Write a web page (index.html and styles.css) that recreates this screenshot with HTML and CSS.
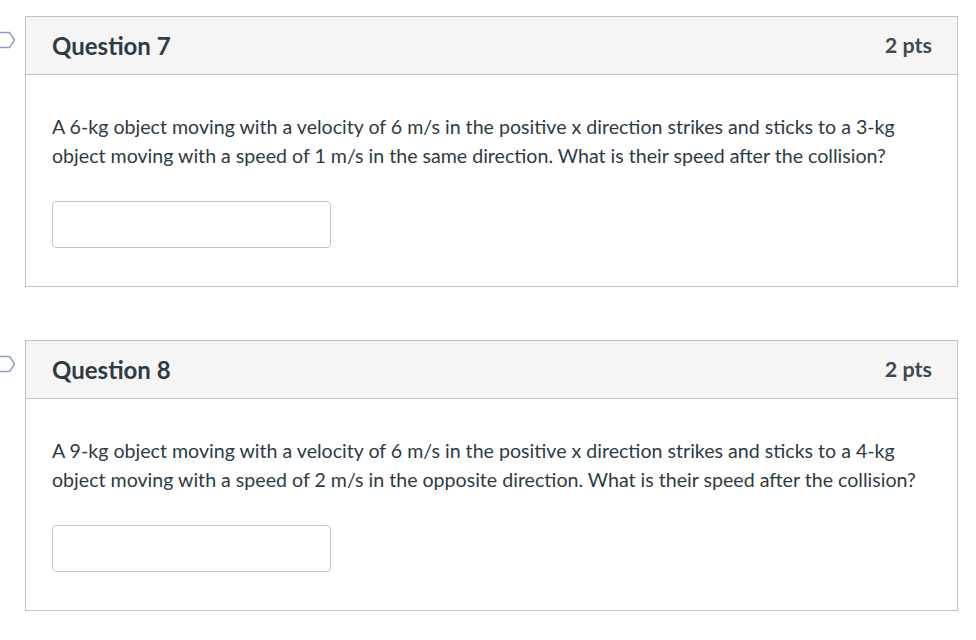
FILE: index.html
```html
<!DOCTYPE html>
<html>
<head>
<meta charset="utf-8">
<link rel="stylesheet" href="styles.css">
</head>
<body>
<div class="quiz">
  <div class="question">
    <svg class="flag" width="16" height="18" viewBox="0 0 16 18"><path d="M-3 1.5 H9.5 L14.5 9 L9.5 16.5 H-3" fill="none" stroke="#8ea3bb" stroke-width="1.4" stroke-linejoin="round"/></svg>
    <div class="q-header">
      <span class="q-title">Question 7</span>
      <span class="q-pts">2 pts</span>
    </div>
    <div class="q-body">
      <p class="q-text">A 6-kg object moving with a velocity of 6 m/s in the positive x direction strikes and sticks to a 3-kg object moving with a speed of 1 m/s in the same direction. What is their speed after the collision?</p>
      <input class="q-input" type="text">
    </div>
  </div>
  <div class="question">
    <svg class="flag" width="16" height="18" viewBox="0 0 16 18"><path d="M-3 1.5 H9.5 L14.5 9 L9.5 16.5 H-3" fill="none" stroke="#8ea3bb" stroke-width="1.4" stroke-linejoin="round"/></svg>
    <div class="q-header">
      <span class="q-title">Question 8</span>
      <span class="q-pts">2 pts</span>
    </div>
    <div class="q-body">
      <p class="q-text">A 9-kg object moving with a velocity of 6 m/s in the positive x direction strikes and sticks to a 4-kg object moving with a speed of 2 m/s in the opposite direction. What is their speed after the collision?</p>
      <input class="q-input" type="text">
    </div>
  </div>
</div>
</body>
</html>
```
FILE: styles.css
```css
html, body {
  margin: 0;
  padding: 0;
  background: #fff;
}
body {
  font-family: Lato, "Liberation Sans", sans-serif;
  color: #2d3b45;
}
.quiz {
  display: flex;
  flex-direction: column;
  gap: 53px;
  padding: 16px 18px 0 25px;
}
.question {
  position: relative;
  border: 1px solid #c2c2c2;
  background: #fff;
}
.flag {
  position: absolute;
  left: -26px;
  top: 14px;
}
.q-header {
  display: flex;
  justify-content: space-between;
  align-items: center;
  height: 57px;
  padding: 0 25px 0 26px;
  background: #f5f5f5;
  border-bottom: 1px solid #c2c2c2;
}
.q-title {
  font-size: 24px;
  font-weight: 700;
  margin-top: -1px;
}
.q-pts {
  font-size: 21.5px;
  font-weight: 700;
  color: #3d4a54;
  margin-top: -1px;
}
.q-body {
  padding: 37px 26px 38px 26px;
}
.q-text {
  margin: 0;
  font-size: 19.6px;
  line-height: 29px;
}
.q-input {
  display: block;
  margin-top: 31px;
  width: 279px;
  height: 47px;
  box-sizing: border-box;
  border: 1px solid #c7c7c7;
  border-radius: 4px;
  background: #fff;
}
```
